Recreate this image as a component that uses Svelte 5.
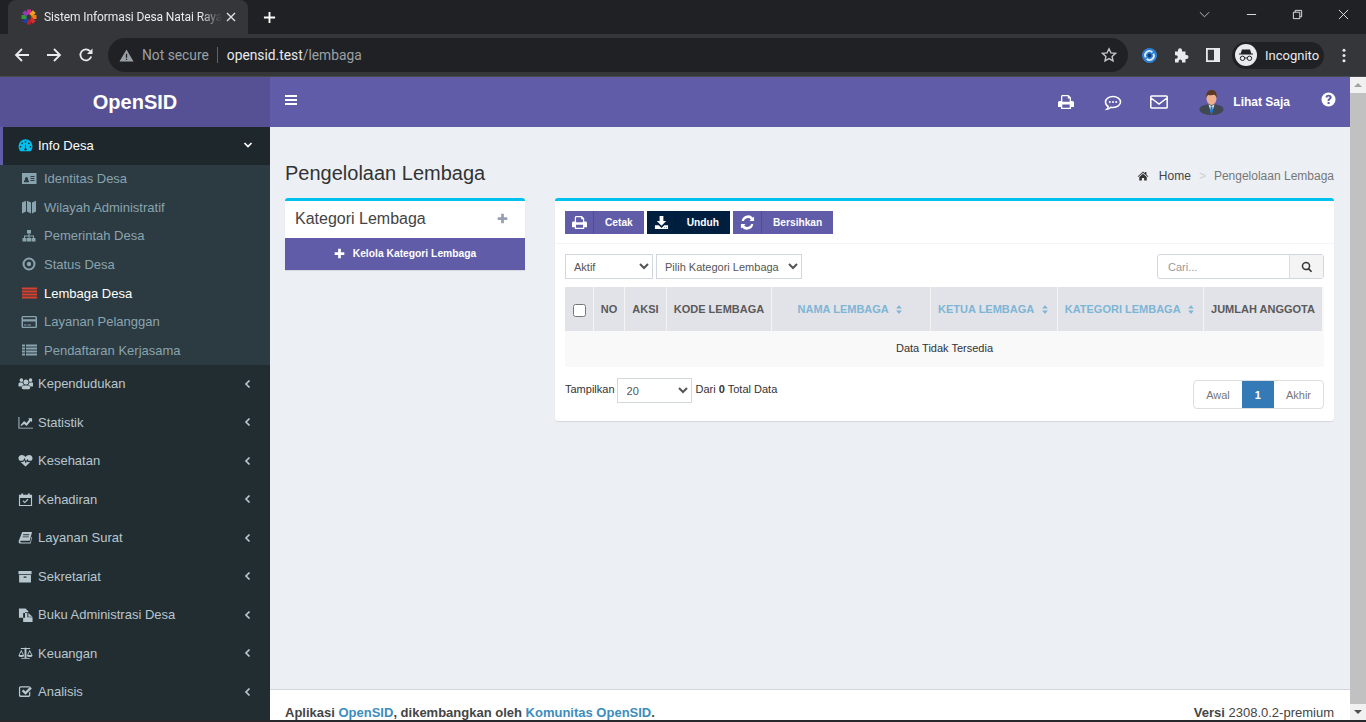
<script>
  const icons = {
    dash: 'M2.500 14a7.500 7.500 0 1 1 11 0zM8 3.200a.9.9 0 1 0 0 1.800.9.9 0 0 0 0-1.800zM4.400 4.800a.9.9 0 1 0 0 1.800.9.9 0 0 0 0-1.800zM11.600 4.800a.9.9 0 1 0 0 1.800.9.9 0 0 0 0-1.800zM2.700 8.400a.9.9 0 1 0 0 1.800.9.9 0 0 0 0-1.800zM13.300 8.400a.9.9 0 1 0 0 1.800.9.9 0 0 0 0-1.800zM7.500 7l.1 3.900a1.200 1.200 0 1 0 .8 0L8.500 7z',
    id: 'M1 3h14.500v11H1zM3 10.800v1.400h5v-1.400L6.800 10a1.700 1.700 0 1 0-2.600 0zM9.500 6v1h4V6zM9.500 8v1h4V8zM9.500 10v1h4v-1z',
    map: 'M1 3.500 5 1.800v10.800l-4 1.800zM6 1.800l4 1.700v10.900l-4-1.800zM11 3.500l4-1.700v10.800l-4 1.800z',
    sitemap: 'M6 2h4v3.500H8.500v2H13V10h1.500v3.500h-4V10H12V8.500H8.500V10H10v3.500H6V10h1.500V8.500H4V10h1.500v3.500h-4V10H3V7.500h4.500v-2H6z',
    target: 'M8 1.500a6.500 6.500 0 1 1 0 13 6.500 6.500 0 0 1 0-13zM8 3.500a4.500 4.500 0 1 0 0 9 4.500 4.500 0 0 0 0-9zM8 5.800a2.200 2.200 0 1 1 0 4.400 2.200 2.200 0 0 1 0-4.400z',
    lines: 'M1 2.500h15v2H1zM1 5.500h15v2H1zM1 8.500h15v2H1zM1 11.500h15v2H1z',
    card: 'M2 2h12.500A1.500 1.500 0 0 1 16 3.500v9a1.500 1.500 0 0 1-1.500 1.500H2a1.500 1.500 0 0 1-1.500-1.500v-9A1.500 1.500 0 0 1 2 2zM2 3.200v2h12.500v-2zM2 7.500v5.300h12.500V7.500zM3 10.500h2.500v1H3zM6.500 10.500H10v1H6.500z',
    list: 'M1 2.500h3v2H1zM5 2.500h11v2H5zM1 5.500h3v2H1zM5 5.500h11v2H5zM1 8.500h3v2H1zM5 8.500h11v2H5zM1 11.500h3v2H1zM5 11.500h11v2H5z',
    users: 'M8.500 3.800a2.700 2.700 0 1 1 0 5.400 2.700 2.700 0 0 1 0-5.400zM3.600 2.500a1.900 1.900 0 1 1 0 3.800 1.900 1.900 0 0 1 0-3.800zM13.400 2.500a1.900 1.900 0 1 1 0 3.800 1.900 1.900 0 0 1 0-3.800zM.5 8.500c0-1 .8-1.600 2-1.600h2.300c.2 1 .7 1.800 1.400 2.400-1.200.4-2 1.100-2.400 2H2C1 11.300.5 10.800.5 10zM16.500 8.500c0-1-.8-1.600-2-1.600h-2.300c-.2 1-.7 1.800-1.400 2.400 1.200.4 2 1.100 2.400 2H15c1 0 1.500-.5 1.500-1.300zM6 10h5c1.300 0 2 1 2 2.500 0 1-.6 1.500-1.500 1.500h-6C4.600 14 4 13.500 4 12.500 4 11 4.700 10 6 10z',
    chart: 'M.5 2h1v11.500H16v1H.5zM3 10.500l3.500-4 2.500 2 3-3.700-1.300-1.300H15v4.300l-1.300-1.300-4.500 5.200-2.600-2L3 12z',
    heart: 'M8 14.500 2.800 9.500h2.900l1-1.700 1.500 3.300 1.400-2.400.5.800h3L8 14.500zM1.700 8.300C.9 7.400.5 6.500.5 5.500.5 3.500 2 2 4 2c1.700 0 3.200 1 4 2.300C8.800 3 10.300 2 12 2c2 0 3.500 1.500 3.500 3.500 0 1-.4 1.900-1.200 2.800h-3.100l-1.200-1.900-1.400 2.500-1.600-3.500-1.600 2.900z',
    cal: 'M1 3h2.500V1.500h2V3h5V1.500h2V3H15v12H1zM2.200 6.500v7.300h11.600V6.500zM5 9.800l.9-.9 1.300 1.400 3-3 .9.900-3.900 3.900z',
    book: 'M4.500 2H15l-2.500 9.500H3.700c-.8 0-1.300.3-1.400.8-.1.500.4 1 1.100 1H13l1.500-6 .6.500L13.500 14.500H3c-1.500 0-2.700-1.100-2.300-2.900zM5.500 4.500v1h6.500v-1zM5 6.800v1h6.500v-1z',
    archive: 'M.5 2h14v3.500H.5zM1.200 6.500h12.600V14.500H1.200zM6 8v1.200h3V8z',
    files: 'M1 1.500h7l3 3v1H7.500V11.500H1zM5.500 6.500H10v4.500h5.500V16H5.500zM11 6.500l4.500 4h-4.500z',
    scale: 'M8 1.500a1 1 0 0 1 .9.700H13v1H9v9.500h3.500v1h-9v-1H7V3.200H3v-1h4.100A1 1 0 0 1 8 1.500zM3.500 4 6.500 10a3 1.800 0 0 1-6 0zM3.500 6 1.700 9.600h3.600zM12.500 4l3 6a3 1.800 0 0 1-6 0zM12.500 6l-1.800 3.600h3.600z',
    check: 'M2.500 2.500h9c.6 0 1 .1 1.300.3l-1 1H2.800c-.3 0-.5.2-.5.500v7.500c0 .3.2.5.5.5h8.500c.3 0 .5-.2.5-.5V9l1.300-1.300v4.300c0 1-.8 1.800-1.800 1.800h-9C1.800 13.800 1 13 1 12V4.300C1 3.300 1.800 2.500 2.500 2.500zM5.800 5.800 8 8l5-5 1.800 1.800L8 11.500 4 7.600z',
    print: 'M4 1h6.500L13 3.500V7h1.500A1.500 1.500 0 0 1 16 8.500V13h-3v2H3v-2H0V8.500A1.500 1.500 0 0 1 1.500 7H3V2zM4.300 2.300v5.500h7.400V4.500H9.800V2.300zM4.300 10.500v3.200h7.400v-3.200z',
    download: 'M6 1h4v5.500h3L8 11.500 3 6.500h3zM1 11h4l3 2.800 3-2.800h4v4H1zM11.500 13a.5.5 0 1 0 0 1 .5.5 0 0 0 0-1zM13.300 13a.5.5 0 1 0 0 1 .5.5 0 0 0 0-1z',
    refresh: 'M13.700 2.800 15 1.500V6.500h-5l1.700-1.700A4.500 4.500 0 0 0 4 6.400H1.800A6.800 6.800 0 0 1 13.700 2.800zM2.300 13.200 1 14.500V9.500h5L4.300 11.200A4.500 4.500 0 0 0 12 9.600h2.200A6.800 6.800 0 0 1 2.300 13.200z',
    home: 'M8 2l2.500 2.200V2.800h2v3.200L15.200 8.500l-.7.800L8 3.700 1.500 9.300l-.7-.8zM8 5l5 4.300V14H9.500v-3.500h-3V14H3V9.300z',
    search: 'M6.700 1a5.700 5.700 0 0 1 4.600 9l3.600 3.600-1.500 1.500-3.600-3.600A5.700 5.700 0 1 1 6.700 1zM6.700 3a3.700 3.700 0 1 0 0 7.400 3.700 3.700 0 0 0 0-7.400z',
    plus: 'M6 1h4v5h5v4h-5v5H6v-5H1V6h5z',
    sort: 'M8 1l4.500 5.500h-9zM3.500 9.500h9L8 15z'
  };
  const sub = [
    ['id', 'Identitas Desa'], ['map', 'Wilayah Administratif'], ['sitemap', 'Pemerintah Desa'],
    ['target', 'Status Desa'], ['lines', 'Lembaga Desa', true], ['card', 'Layanan Pelanggan'], ['list', 'Pendaftaran Kerjasama']
  ];
  const menu = [
    ['users', 'Kependudukan'], ['chart', 'Statistik'], ['heart', 'Kesehatan'], ['cal', 'Kehadiran'], ['book', 'Layanan Surat'],
    ['archive', 'Sekretariat'], ['files', 'Buku Administrasi Desa'], ['scale', 'Keuangan'], ['check', 'Analisis']
  ];
  const petals = ['#d9258f', '#f0a21c', '#ef7d1a', '#d92b2b', '#b1222f', '#1d3fa8', '#2f9c3a', '#8a3fb8'];
</script>

{#snippet icon(name, cls = '')}
  <svg class="ico {cls}" viewBox="0 0 16 16" aria-hidden="true"><path fill="currentColor" fill-rule="evenodd" d={icons[name]} /></svg>
{/snippet}

<div class="window">
  <div class="tabstrip">
    <div class="tab">
      <svg class="favicon" viewBox="0 0 16 16" aria-hidden="true">
        {#each petals as c, i}
          <rect x="6" y="0.500" width="4" height="5" fill={c} transform="rotate({i * 45} 8 8)" />
        {/each}
      </svg>
      <span class="tabtitle">Sistem Informasi Desa Natai Raya</span>
      <svg class="tabx" viewBox="0 0 10 10"><path d="M1 1l8 8M9 1l-8 8" stroke="#dfe1e5" stroke-width="1.400" /></svg>
    </div>
    <svg class="newtab" viewBox="0 0 14 14"><path d="M7 1v12M1 7h12" stroke="#fff" stroke-width="2" /></svg>
    <div class="winctl">
      <svg viewBox="0 0 12 12" class="w-chev"><path d="M1 3.500l5 5 5-5" fill="none" stroke="#c4c7c5" /></svg>
      <svg viewBox="0 0 12 12" class="w-min"><path d="M1 6h10" stroke="#e8eaed" /></svg>
      <svg viewBox="0 0 12 12" class="w-max"><path d="M1.500 3.500h7v7h-7zM3.500 3.500v-2h7v7h-2" fill="none" stroke="#e8eaed" /></svg>
      <svg viewBox="0 0 12 12" class="w-close"><path d="M1 1l10 10M11 1L1 11" stroke="#e8eaed" /></svg>
    </div>
  </div>
  <div class="toolbar">
    <svg class="nav" viewBox="0 0 16 16"><path d="M15 8H2M8 2 2 8l6 6" fill="none" stroke="#e8eaed" stroke-width="1.800" /></svg>
    <svg class="nav" viewBox="0 0 16 16"><path d="M1 8h13M8 2l6 6-6 6" fill="none" stroke="#e8eaed" stroke-width="1.800" /></svg>
    <svg class="nav" viewBox="0 0 16 16"><path d="M13.200 9.500A5.500 5.500 0 1 1 12 4.200" fill="none" stroke="#e8eaed" stroke-width="1.800" /><path d="M14.500 1.500v5.500H9z" fill="#e8eaed" /></svg>
    <div class="omnibox">
      <svg class="warn" viewBox="0 0 16 16"><path fill="#9aa0a6" fill-rule="evenodd" d="M8 1.500 15.500 14.500H.5zM7.300 6v4.500h1.400V6zM7.300 11.500v1.400h1.400v-1.400z" /></svg>
      <span class="notsec">Not secure</span>
      <span class="sep"></span>
      <span class="url">opensid.test<span class="path">/lembaga</span></span>
      <svg class="star" viewBox="0 0 16 16"><path d="M8 1.800l1.900 4.100 4.500.5-3.300 3 .9 4.400L8 11.600l-4 2.200.9-4.400-3.300-3 4.500-.5z" fill="none" stroke="#c4c7c5" stroke-width="1.400" /></svg>
    </div>
    <svg class="ext" viewBox="0 0 18 18">
      <circle cx="9" cy="9" r="8" fill="#2f7fd0" /><path d="M5 11a4.500 4.500 0 0 1 7-5.500M13 7a4.500 4.500 0 0 1-7 5.500" fill="none" stroke="#d8ecfa" stroke-width="2" /><circle cx="9" cy="9" r="2" fill="#123a78" />
    </svg>
    <svg class="puzzle" viewBox="0 0 16 16"><path fill="#e8eaed" d="M2 4.500h3V3.200a2 2 0 0 1 4 0v1.300h3.500V8h1a2 2 0 0 1 0 4h-1v3.500H9v-1.200a1.700 1.700 0 0 0-3.400 0v1.200H2v-3.700h1a1.800 1.800 0 0 0 0-3.600H2z" /></svg>
    <svg class="panel" viewBox="0 0 14 14"><path fill="#e8eaed" fill-rule="evenodd" d="M0 0h14v14H0zM1.800 1.800v10.400H8V1.800z" /></svg>
    <div class="incog">
      <svg class="incog-ico" viewBox="0 0 22 22">
        <circle cx="11" cy="11" r="11" fill="#e8eaed" /><path fill="#202124" d="M7 5.500h8l1.300 4H18v1H4v-1h1.700z" />
        <circle cx="7.500" cy="14.300" r="2.200" fill="none" stroke="#202124" /><circle cx="14.500" cy="14.300" r="2.200" fill="none" stroke="#202124" /><path stroke="#202124" d="M9.700 14h2.600" />
      </svg>
      <span>Incognito</span>
    </div>
    <svg class="kebab" viewBox="0 0 4 16"><circle cx="2" cy="2.500" r="1.600" fill="#e8eaed" /><circle cx="2" cy="8" r="1.600" fill="#e8eaed" /><circle cx="2" cy="13.500" r="1.600" fill="#e8eaed" /></svg>
  </div>

  <div class="app">
    <aside class="sidebar">
      <div class="logo">OpenSID</div>
      <div class="item active">
        {@render icon('dash', 'mi cyan')}
        <span>Info Desa</span>
        <svg class="chev" viewBox="0 0 10 10"><path d="M1.500 3 5 6.500 8.500 3" fill="none" stroke="#fff" stroke-width="1.700" /></svg>
      </div>
      <ul class="tree">
        {#each sub as s}
          <li class:cur={s[2]}>{@render icon(s[0], s[2] ? 'si red' : 'si')}<span>{s[1]}</span></li>
        {/each}
      </ul>
      {#each menu as m}
        <div class="item">
          {@render icon(m[0], 'mi')}
          <span>{m[1]}</span>
          <svg class="chev" viewBox="0 0 10 10"><path d="M6.500 1.500 3 5l3.500 3.500" fill="none" stroke="#b8c7ce" stroke-width="1.700" /></svg>
        </div>
      {/each}
    </aside>

    <div class="main">
      <header class="topbar">
        <div class="burger"><i></i><i></i><i></i></div>
        <div class="topright">
          {@render icon('print', 'top t-print')}
          <svg class="ico top t-chat" viewBox="0 0 18 16"><path d="M9 1.500c4.200 0 7.500 2.500 7.500 5.500S13.200 12.500 9 12.500c-.8 0-1.500-.1-2.200-.2-1 1-2.400 1.700-4 1.900.8-.8 1.300-1.700 1.400-2.700C2.500 10.500 1.500 8.900 1.500 7 1.500 4 4.800 1.500 9 1.500z" fill="none" stroke="#fff" stroke-width="1.500" /><circle cx="5.800" cy="7" r="1" fill="#fff" /><circle cx="9" cy="7" r="1" fill="#fff" /><circle cx="12.200" cy="7" r="1" fill="#fff" /></svg>
          <svg class="ico top t-mail" viewBox="0 0 18 16"><path d="M1.500 2h15a.7.700 0 0 1 .7.700v10.600a.7.700 0 0 1-.7.700h-15a.7.700 0 0 1-.7-.7V2.700a.7.700 0 0 1 .7-.7zM1 4l8 6 8-6" fill="none" stroke="#fff" stroke-width="1.500" /></svg>
          <svg class="avatar" viewBox="0 0 25 25">
            <ellipse cx="12.500" cy="19.500" rx="12" ry="5.500" fill="#3f4853" />
            <path fill="#dfe6ea" d="M9.500 14.500 12.500 24 15.500 14.500 12.500 16z" /><path fill="#1976c9" d="M11.700 16.500h1.600l.7 5-1.500 2.500-1.500-2.500z" />
            <ellipse cx="12.500" cy="8.500" rx="5" ry="6.500" fill="#eeb08c" /><path fill="#5b3a24" d="M7.300 8C6.800 2.500 9 0 12.800 0c3.400 0 5.300 2.500 4.900 8-.7-2-1.500-3-2.700-3.300-2 .6-4 .5-5.800.2C8.200 5.500 7.700 6.500 7.300 8z" />
          </svg>
          <span class="uname">Lihat Saja</span>
          <svg class="ico t-help" viewBox="0 0 16 16"><path fill="#fff" fill-rule="evenodd" d="M8 .5a7.500 7.500 0 1 1 0 15 7.500 7.500 0 0 1 0-15zM7 10.700v2.200h2.200v-2.200zM8.100 3c-1.800 0-3 .9-3.300 2.500l1.900.5c.2-.8.600-1.200 1.300-1.200.7 0 1.100.4 1.100.9 0 .5-.3.800-.9 1.200-.9.600-1.200 1.300-1.200 2.800h2.100c0-.9.200-1.200.9-1.700.9-.6 1.400-1.300 1.400-2.400C11.400 4 10 3 8.100 3z" /></svg>
        </div>
      </header>

      <section class="content">
        <div class="heading">
          <h1>Pengelolaan Lembaga</h1>
          <div class="crumb">{@render icon('home', 'c-home')}<a href="#top">Home</a><span class="gt">&gt;</span><span class="cur-c">Pengelolaan Lembaga</span></div>
        </div>
        <div class="cols">
          <div class="leftbox">
            <div class="box-h"><span>Kategori Lembaga</span>{@render icon('plus', 'b-plus')}</div>
            <div class="kelola">{@render icon('plus', 'k-plus')}<span>Kelola Kategori Lembaga</span></div>
          </div>
          <div class="rightbox">
            <div class="actions">
              <div class="btn">{@render icon('print', 'b-i')}<span class="lab">Cetak</span></div>
              <div class="btn navy">{@render icon('download', 'b-i')}<span class="lab">Unduh</span></div>
              <div class="btn">{@render icon('refresh', 'b-i')}<span class="lab">Bersihkan</span></div>
            </div>
            <div class="body">
              <div class="filters">
                <select class="s1"><option>Aktif</option></select>
                <select class="s2"><option>Pilih Kategori Lembaga</option></select>
                <div class="search">
                  <input placeholder="Cari..." />
                  <div class="sbtn">{@render icon('search', 's-i')}</div>
                </div>
              </div>
              <table>
                <colgroup><col class="c0" /><col class="c1" /><col class="c2" /><col class="c3" /><col class="c4" /><col class="c5" /><col class="c6" /><col class="c7" /></colgroup>
                <thead>
                  <tr>
                    <th><input type="checkbox" /></th><th>NO</th><th>AKSI</th><th>KODE LEMBAGA</th>
                    <th class="sortable">NAMA LEMBAGA {@render icon('sort', 'sort')}</th>
                    <th class="sortable">KETUA LEMBAGA {@render icon('sort', 'sort')}</th>
                    <th class="sortable">KATEGORI LEMBAGA {@render icon('sort', 'sort')}</th>
                    <th>JUMLAH ANGGOTA</th>
                  </tr>
                </thead>
                <tbody><tr><td colspan="8">Data Tidak Tersedia</td></tr></tbody>
              </table>
              <div class="pager-row">
                <div class="len"><span>Tampilkan</span><select class="s3"><option>20</option></select><span class="total">Dari <b>0</b> Total Data</span></div>
                <div class="pager"><span>Awal</span><span class="on">1</span><span>Akhir</span></div>
              </div>
            </div>
          </div>
        </div>
      </section>

      <footer class="foot">
        <div><b>Aplikasi <a href="#top">OpenSID</a>, dikembangkan oleh <a href="#top">Komunitas OpenSID</a>.</b></div>
        <div><b>Versi</b> 2308.0.2-premium</div>
      </footer>
    </div>

    <div class="scrollbar">
      <svg class="arrow" viewBox="0 0 16 16"><path d="M4 10l4-4 4 4z" fill="#a3a3a3" /></svg>
      <div class="thumb"></div>
      <svg class="arrow" viewBox="0 0 16 16"><path d="M4 6l4 4 4-4z" fill="#505050" /></svg>
    </div>
  </div>
  <div class="frame"></div>
</div>

<style>
  :global(body) { margin: 0; overflow: hidden; font-family: "Liberation Sans", Arial, sans-serif; }
  .window { height: 722px; display: flex; flex-direction: column; overflow: hidden; background: #ecf0f5; }
  a { color: #3c8dbc; text-decoration: none; }
  .ico { display: block; flex: none; }

  .tabstrip { height: 34px; background: #202124; display: flex; align-items: flex-end; flex: none; position: relative; }
  .tab { width: 240px; height: 34px; margin-left: 8px; background: #35363a; border-radius: 8px 8px 0 0; display: flex; align-items: center; box-sizing: border-box; padding: 0 11px 0 13px; }
  .favicon { width: 16px; height: 16px; flex: none; margin-right: 7px; }
  .tabtitle { font: 12px "Roboto", "Liberation Sans", sans-serif; letter-spacing: -.1px; color: #e8eaed; white-space: nowrap; overflow: hidden; width: 178px; -webkit-mask-image: linear-gradient(90deg, #000 88%, transparent); mask-image: linear-gradient(90deg, #000 88%, transparent); }
  .tabx { width: 10px; height: 10px; margin-left: 4px; flex: none; }
  .newtab { width: 13px; height: 13px; margin: 0 0 10px 15px; }
  .winctl { margin-left: auto; display: flex; align-self: flex-start; align-items: center; height: 28px; }
  .winctl svg { width: 11px; height: 11px; margin-right: 35px; }
  .winctl .w-chev { margin-right: 36px; }
  .winctl .w-close { margin-right: 17px; }

  .toolbar { height: 43px; box-sizing: border-box; border-bottom: 1px solid #4a4b4f; background: #35363a; display: flex; align-items: center; padding: 0 0 0 14px; flex: none; }
  .nav { width: 16px; height: 16px; margin-right: 16px; }
  .omnibox { width: 1020px; height: 34px; margin-left: -2px; border-radius: 17px; background: #202124; display: flex; align-items: center; box-sizing: border-box; padding: 0 11px; font: 13.800px "Roboto", "Liberation Sans", sans-serif; }
  .warn { width: 15px; height: 15px; margin-right: 8px; }
  .notsec { color: #9aa0a6; }
  .sep { width: 1px; height: 16px; background: #5f6368; margin: 0 9px 0 8px; }
  .url { color: #e8eaed; }
  .path { color: #9aa0a6; }
  .star { width: 16px; height: 16px; margin-left: auto; }
  .ext { width: 17px; height: 17px; margin-left: 13px; }
  .puzzle { width: 16px; height: 16px; margin-left: 15px; }
  .panel { width: 14px; height: 14px; margin-left: 17px; }
  .incog { margin-left: 12px; height: 27px; width: 92px; border-radius: 14px; background: #202124; display: flex; align-items: center; gap: 8px; padding-left: 3px; box-sizing: border-box; font: 13px "Roboto", "Liberation Sans", sans-serif; color: #e8eaed; }
  .incog-ico { width: 22px; height: 22px; }
  .kebab { width: 4px; height: 15px; margin-left: 18px; }

  .app { flex: 1; min-height: 0; display: flex; }
  .sidebar { width: 270px; flex: none; background: #222d32; color: #b8c7ce; font-size: 13px; overflow: hidden; }
  .logo { height: 50px; background: #565194; color: #fff; font-size: 20px; font-weight: 700; line-height: 50px; text-align: center; }
  .item { height: 38.500px; display: flex; align-items: center; padding: 0 17px 1px 18px; box-sizing: border-box; position: relative; }
  .item > span { margin-left: 5px; }
  .item.active { background: #1e282c; color: #fff; border-left: 3px solid #605ca8; padding-left: 15px; padding-bottom: 2px; height: 38px; }
  :global(.mi) { width: 15px; height: 15px; }
  :global(.cyan) { color: #00c0ef; }
  .chev { width: 10px; height: 10px; margin-left: auto; }
  .tree { list-style: none; margin: 0; padding: 0 0 0 3px; height: 200px; background: #2c3b41; color: #8aa4af; box-sizing: border-box; }
  .tree li { height: 28.700px; display: flex; align-items: center; padding: 0 0 2px 18px; box-sizing: border-box; }
  .tree li span { margin-left: 7px; }
  .tree li.cur { color: #fff; }
  :global(.si) { width: 16px; height: 16px; }
  :global(.red) { color: #d9402f; }

  .main { flex: 1; min-width: 0; display: flex; flex-direction: column; }
  .topbar { height: 50px; background: #605ca8; flex: none; display: flex; align-items: center; justify-content: space-between; padding: 0 15px; color: #fff; }
  .burger { display: flex; flex-direction: column; gap: 2px; margin-top: -4px; }
  .burger i { display: block; width: 12px; height: 2px; background: #fff; }
  .topright { display: flex; align-items: center; }
  :global(.top) { width: 18px; height: 16px; color: #fff; }
  :global(.t-print) { margin-right: 29px; }
  .t-chat { margin-right: 28px; margin-top: 1px; }
  .t-mail { margin-right: 31px; }
  .avatar { width: 25px; height: 25px; margin-right: 9px; }
  .uname { font-size: 12px; font-weight: 700; margin-right: 31px; }
  .t-help { width: 15px; height: 15px; margin-top: -5px; margin-right: -1px; }

  .content { flex: 1; min-height: 0; padding: 34px 16px 0 15px; color: #333; }
  .heading { display: flex; justify-content: space-between; align-items: center; height: 24px; margin-bottom: 13px; }
  h1 { font-size: 20px; font-weight: 400; margin: 0; color: #333; }
  .crumb { display: flex; align-items: center; font-size: 12px; margin-top: 6px; }
  :global(.c-home) { width: 12px; height: 12px; color: #333; margin-right: 10px; }
  .crumb a { color: #444; }
  .gt { color: #ccc; margin: 0 8px; }
  .cur-c { color: #777; }
  .cols { display: flex; gap: 30px; align-items: flex-start; }
  .leftbox { width: 240px; flex: none; border-top: 3px solid #00c0ef; border-radius: 3px 3px 0 0; background: #fff; box-shadow: 0 1px 1px rgba(0,0,0,.1); }
  .box-h { height: 37px; box-sizing: border-box; padding: 0 17px 2px 10px; display: flex; align-items: center; justify-content: space-between; font-size: 16px; color: #444; }
  :global(.b-plus) { width: 11px; height: 11px; color: #97a0b3; }
  .kelola { height: 32px; box-sizing: border-box; padding-bottom: 2px; background: #605ca8; color: #fff; font-size: 10.300px; font-weight: 700; display: flex; align-items: center; justify-content: center; gap: 8px; }
  :global(.k-plus) { width: 11px; height: 11px; color: #fff; }
  .rightbox { flex: 1; min-width: 0; height: 223px; box-sizing: border-box; border-top: 3px solid #00c0ef; background: #fff; border-radius: 3px; box-shadow: 0 1px 1px rgba(0,0,0,.1); }
  .actions { height: 43px; box-sizing: border-box; padding: 10px 10px 0; display: flex; gap: 3px; border-bottom: 1px solid #f4f4f4; }
  .btn { height: 23px; background: #605ca8; color: #fff; display: flex; align-items: center; font-size: 10.200px; font-weight: 700; }
  .btn.navy { background: #001f3f; }
  :global(.b-i) { width: 15px; height: 15px; margin: 0 6px 0 7px; color: #fff; }
  .lab { border-left: 1px solid rgba(0,0,0,.15); height: 23px; line-height: 23px; padding: 0 11px; }
  .body { padding: 10px 10px 0; }
  .filters { display: flex; gap: 3px; height: 25px; margin-bottom: 8px; }
  select { font: 11px "Liberation Sans", Arial, sans-serif; color: #555; background: #fff; border: 1px solid #d2d6de; padding: 0 4px; border-radius: 0; }
  .s1 { width: 88px; }
  .s2 { width: 146px; }
  .search { margin-left: auto; width: 167px; display: flex; border: 1px solid #d2d6de; border-radius: 3px; box-sizing: border-box; }
  .search input { flex: 1; min-width: 0; border: 0; outline: 0; padding: 0 10px; font: 11px "Liberation Sans", Arial, sans-serif; background: transparent; }
  .search input::placeholder { color: #999; }
  .sbtn { width: 33px; background: #f4f4f4; border-left: 1px solid #ddd; display: flex; align-items: center; justify-content: center; }
  :global(.s-i) { width: 12px; height: 12px; color: #333; }
  table { width: 759px; table-layout: fixed; border-collapse: separate; border-spacing: 0; font-size: 11px; }
  .c0 { width: 29px; } .c1 { width: 31px; } .c2 { width: 42px; } .c3 { width: 105px; } .c4 { width: 159px; } .c5 { width: 127px; } .c6 { width: 146px; } .c7 { width: 120px; }
  th { height: 44px; padding: 0; background: #e2e3e8; color: #5a5a5a; font-weight: 700; border-right: 1px solid #f4f4f4; white-space: nowrap; text-align: center; box-sizing: border-box; }
  th:last-child { border-right: 2px solid #f9f9f9; }
  th input { width: 13px; height: 13px; margin: 4px 0 0; }
  th.sortable { color: #7db5d6; }
  th.sortable :global(.sort) { display: inline-block; width: 10px; height: 11px; margin-left: 3px; color: #7db5d6; vertical-align: -2px; }
  td { height: 36px; box-sizing: border-box; padding: 0 0 2px; background: #f9f9f9; text-align: center; color: #333; }
  .pager-row { display: flex; justify-content: space-between; margin-top: 11px; }
  .len { display: flex; align-items: flex-start; gap: 2px; font-size: 11px; color: #333; line-height: 23px; }
  .total { margin-left: 2px; }
  .s3 { width: 75px; height: 25px; padding-left: 5px; }
  .pager { display: flex; margin-top: 2px; height: 29px; border: 1px solid #ddd; border-radius: 4px; box-sizing: border-box; font-size: 11px; color: #777; overflow: hidden; }
  .pager span { display: flex; align-items: center; padding: 0 12px; }
  .pager .on { background: #337ab7; color: #fff; font-weight: 700; padding: 0 13px; }

  .foot { height: 31px; flex: none; box-sizing: border-box; background: #fff; border-top: 1px solid #d2d6de; display: flex; justify-content: space-between; align-items: flex-start; padding: 14px 16px 0 15px; font-size: 13px; line-height: 17px; color: #444; white-space: nowrap; }

  .scrollbar { width: 16px; flex: none; background: #f1f1f1; display: flex; flex-direction: column; }
  .arrow { width: 16px; height: 16px; flex: none; }
  .thumb { flex: 1; background: #c1c1c1; }
  .frame { height: 2px; background: #26282b; flex: none; }
</style>
